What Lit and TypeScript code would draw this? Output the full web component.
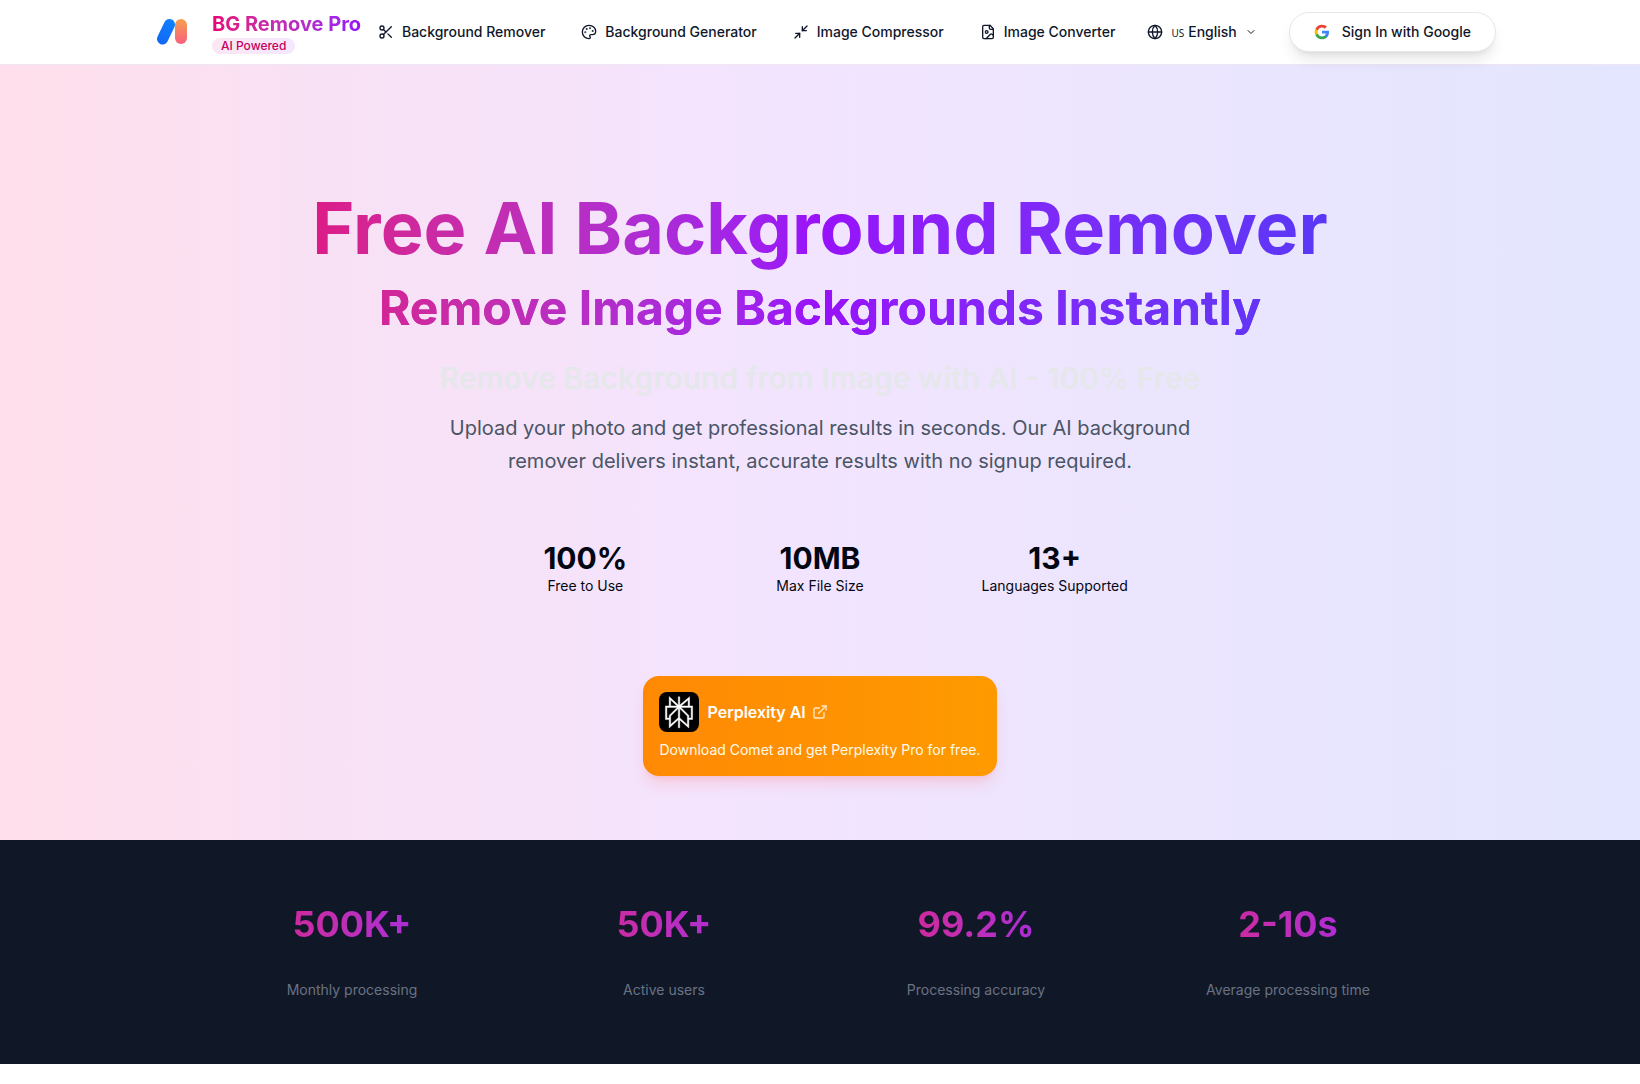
import { LitElement, html, css, svg } from "lit";
import { customElement } from "lit/decorators.js";

const icon = (body: unknown, cls = "icon") => html`<svg class=${cls} viewBox="0 0 24 24" aria-hidden="true">${body}</svg>`;

const scissors = svg`<circle cx="6" cy="6" r="3"/><path d="M8.12 8.12 12 12"/><path d="M20 4 8.12 15.88"/><circle cx="6" cy="18" r="3"/><path d="M14.8 14.8 20 20"/>`;
const palette = svg`<path d="M12 22a1 1 0 0 1 0-20 10 9 0 0 1 10 9 5 5 0 0 1-5 5h-2.250a1.750 1.750 0 0 0-1.400 2.800l.3.400a1.750 1.750 0 0 1-1.400 2.800z"/><circle cx="13.500" cy="6.500" r=".5"/><circle cx="17.500" cy="10.500" r=".5"/><circle cx="6.500" cy="12.500" r=".5"/><circle cx="8.500" cy="7.500" r=".5"/>`;
const minimize = svg`<path d="m14 10 7-7"/><path d="M20 10h-6V4"/><path d="m3 21 7-7"/><path d="M4 14h6v6"/>`;
const fileImage = svg`<path d="M15 2H6a2 2 0 0 0-2 2v16a2 2 0 0 0 2 2h12a2 2 0 0 0 2-2V7Z"/><path d="M14 2v4a2 2 0 0 0 2 2h4"/><circle cx="10" cy="12" r="2"/><path d="m20 17-1.300-1.300a2.410 2.410 0 0 0-3.400 0L9 22"/>`;
const globe = svg`<circle cx="12" cy="12" r="10"/><path d="M12 2a14.500 14.500 0 0 0 0 20 14.500 14.500 0 0 0 0-20"/><path d="M2 12h20"/>`;
const chevron = svg`<path d="m6 9 6 6 6-6"/>`;
const external = svg`<path d="M15 3h6v6"/><path d="M10 14 21 3"/><path d="M18 13v6a2 2 0 0 1-2 2H5a2 2 0 0 1-2-2V8a2 2 0 0 1 2-2h6"/>`;

const links = [
  { label: "Background Remover", glyph: scissors },
  { label: "Background Generator", glyph: palette },
  { label: "Image Compressor", glyph: minimize },
  { label: "Image Converter", glyph: fileImage },
];

const facts = [
  { value: "100%", label: "Free to Use" },
  { value: "10MB", label: "Max File Size" },
  { value: "13+", label: "Languages Supported" },
];

const metrics = [
  { value: "500K+", label: "Monthly processing" },
  { value: "50K+", label: "Active users" },
  { value: "99.2%", label: "Processing accuracy" },
  { value: "2-10s", label: "Average processing time" },
];

@customElement("site-header")
class SiteHeader extends LitElement {
  static styles = css`
    :host { display: block; position: relative; z-index: 1; background: #fff; box-shadow: 0 1px 0 #efe6f4; }
    .bar { box-sizing: border-box; max-width: 1400px; height: 64px; margin: 0 auto; padding: 0 24px; display: flex; align-items: center; justify-content: space-between; }
    a { color: inherit; text-decoration: none; }
    .brand { display: flex; align-items: center; gap: 12px; }
    .logo { width: 56px; height: 56px; flex: none; }
    .names { display: flex; flex-direction: column; align-items: flex-start; white-space: nowrap; }
    .name { font-size: 20px; line-height: 28px; font-weight: 700; color: transparent; background: linear-gradient(to right in oklab, #e60076, #9810fa); background-clip: text; -webkit-background-clip: text; }
    .tag { padding: 0 9px; border-radius: 8px; font-size: 12px; line-height: 16px; font-weight: 500; color: #c6005c; background: linear-gradient(to right in oklab, #fce7f3, #f3e8ff); }
    .links { display: flex; align-items: center; }
    .link, .lang { display: flex; align-items: center; gap: 8px; height: 36px; padding: 0 16px; font: 500 14px/20px Inter, sans-serif; color: #0f172b; white-space: nowrap; }
    .link + .link { margin-left: 4px; }
    .icon { width: 16px; height: 16px; flex: none; fill: none; stroke: currentColor; stroke-width: 2; stroke-linecap: round; stroke-linejoin: round; }
    .chevron { width: 12px; height: 12px; }
    button { background: none; border: 0; cursor: pointer; }
    .flag { font: 400 10px/16px "Noto Sans", sans-serif; }
    .locale { display: flex; align-items: baseline; gap: 4px; }
    .signin { display: flex; align-items: center; gap: 12px; height: 40px; margin-left: 16px; padding: 0 24px; border: 1px solid #e5e7eb; border-radius: 20px; background: #fff; color: #0f172b; font: 500 14px/20px Inter, sans-serif; white-space: nowrap; box-shadow: 0 10px 15px -3px rgb(0 0 0 / 0.1), 0 4px 6px -4px rgb(0 0 0 / 0.1); }
    .google { width: 16px; height: 16px; flex: none; }
  `;
  render() {
    return html`<header class="bar">
      <a class="brand" href="#">
        <svg class="logo" viewBox="0 0 56 56" aria-hidden="true">
          <defs>
            <linearGradient id="blue" gradientUnits="userSpaceOnUse" x1="28" y1="16" x2="15" y2="40"><stop offset="0" stop-color="#0d82ff"/><stop offset="1" stop-color="#1465f5"/></linearGradient>
            <linearGradient id="warm" x1="0" y1="0" x2="0" y2="1"><stop offset="0" stop-color="#f5a050"/><stop offset="1" stop-color="#f8607c"/></linearGradient>
          </defs>
          <path d="M25.500 20.500 18.500 35" stroke="url(#blue)" stroke-width="11" stroke-linecap="round"/>
          <rect x="31" y="15" width="12" height="25" rx="6" fill="url(#warm)"/>
        </svg>
        <span class="names"><span class="name">BG Remove Pro</span><span class="tag">AI Powered</span></span>
      </a>
      <nav class="links">
        ${links.map((l) => html`<a class="link" href="#">${icon(l.glyph)}<span>${l.label}</span></a>`)}
        <button class="lang" type="button">${icon(globe)}<span class="locale"><span class="flag">US</span><span>English</span></span>${icon(chevron, "icon chevron")}</button>
        <button class="signin" type="button">
          <svg class="google" viewBox="0 0 24 24" aria-hidden="true">
            <path fill="#4285F4" d="M22.560 12.250c0-.78-.07-1.530-.2-2.250H12v4.260h5.920a5.060 5.060 0 0 1-2.200 3.320v2.770h3.570c2.080-1.920 3.270-4.740 3.270-8.100z"/>
            <path fill="#34A853" d="M12 23c2.970 0 5.460-.98 7.280-2.660l-3.570-2.770c-.98.66-2.230 1.060-3.710 1.060-2.860 0-5.290-1.930-6.160-4.530H2.180v2.840A11 11 0 0 0 12 23z"/>
            <path fill="#FBBC05" d="M5.840 14.090a6.600 6.600 0 0 1 0-4.180V7.070H2.180a11 11 0 0 0 0 9.860z"/>
            <path fill="#EA4335" d="M12 5.380c1.620 0 3.060.56 4.210 1.640l3.150-3.150C17.450 2.090 14.970 1 12 1 7.700 1 3.990 3.470 2.180 7.070l3.660 2.840C6.710 7.310 9.140 5.380 12 5.380z"/>
          </svg>
          <span>Sign In with Google</span>
        </button>
      </nav>
    </header>`;
  }
}

@customElement("hero-section")
class HeroSection extends LitElement {
  static styles = css`
    :host { display: block; background: linear-gradient(to right in oklab, #ffdfeb, #f9e1f4 18%, #f3e4fe 46%, #e3e6fe); }
    .hero { padding: 128px 32px 64px; display: flex; flex-direction: column; align-items: center; text-align: center; }
    .heading { box-sizing: border-box; width: 100%; max-width: 1152px; margin: 0; font-weight: 700; color: transparent; background: linear-gradient(to right in oklab, #e60076, #9810fa 50%, #4f39f6); background-clip: text; -webkit-background-clip: text; }
    .title { font-size: 72px; line-height: 72px; }
    .subtitle { display: block; margin-top: 16px; font-size: 48px; line-height: 56px; }
    .tagline { margin: 24px 0 0; font-size: 30px; line-height: 36px; font-weight: 600; color: #e5e7eb; }
    .lead { max-width: 768px; margin: 16px 0 0; font-size: 20px; line-height: 33px; color: #4a5565; }
    .facts { box-sizing: border-box; width: 100%; max-width: 672px; margin: 62px 0 0; display: grid; grid-template-columns: repeat(3, 1fr); gap: 32px; }
    .fact { display: flex; flex-direction: column-reverse; }
    .fact dt { font-size: 14px; line-height: 20px; color: #030712; }
    .fact dd { margin: 0; font-size: 30px; line-height: 36px; font-weight: 700; color: #030712; }
    .promo { margin-top: 80px; padding: 16px; border-radius: 16px; display: flex; flex-direction: column; gap: 8px; text-align: left; text-decoration: none; color: #fff; background: linear-gradient(to right in oklab, #ff8904, #fe9a00); box-shadow: 0 10px 15px -3px rgb(255 100 100 / 0.2), 0 4px 6px -4px rgb(255 100 100 / 0.2); }
    .row { display: flex; align-items: center; gap: 8px; }
    .mark { width: 40px; height: 40px; flex: none; }
    .who { display: flex; align-items: center; gap: 6px; font-size: 16px; line-height: 24px; font-weight: 600; }
    .what { font-size: 14px; line-height: 20px; color: #fffbeb; }
    .icon { width: 16px; height: 16px; fill: none; stroke: #ffe8c8; stroke-width: 2; stroke-linecap: round; stroke-linejoin: round; }
  `;
  render() {
    return html`<section class="hero">
      <h1 class="heading title">Free AI Background Remover<span class="heading subtitle">Remove Image Backgrounds Instantly</span></h1>
      <h2 class="tagline">Remove Background from Image with AI - 100% Free</h2>
      <p class="lead">Upload your photo and get professional results in seconds. Our AI background remover delivers instant, accurate results with no signup required.</p>
      <dl class="facts">${facts.map((f) => html`<div class="fact"><dt>${f.label}</dt><dd>${f.value}</dd></div>`)}</dl>
      <a class="promo" href="#">
        <span class="row">
          <svg class="mark" viewBox="0 0 40 40" aria-hidden="true">
            <rect width="40" height="40" rx="8"/>
            <path transform="translate(4.300 4.600) scale(1.310)" fill="#fff" stroke="#fff" stroke-width=".3" d="M22.3977 7.0896h-2.3106V.0676l-7.5094 6.3542V.1577h-1.1554v6.1966L4.4904 0v7.0896H1.6023v10.3976h2.8882V24l6.932-6.3591v6.2005h1.1554v-6.0469l6.9318 6.1807v-6.4879h2.8882V7.0896zm-3.4657-4.531v4.531h-5.355l5.355-4.531zm-13.2862.0676 4.8691 4.4634H5.6458V2.6262zM2.7576 16.332V8.245h7.8476l-6.1149 6.1147v1.9723H2.7576zm2.8882 5.0404v-3.8852h.0001v-2.6488l5.7763-5.7764v7.0111l-5.7764 5.2993zm12.7086.0248-5.7766-5.1509V9.0618l5.7766 5.7766v6.5588zm2.8882-5.0652h-1.733v-1.9723L13.3948 8.245h7.8478v8.087z"/>
          </svg>
          <span class="who">Perplexity AI ${icon(external)}</span>
        </span>
        <span class="what">Download Comet and get Perplexity Pro for free.</span>
      </a>
    </section>`;
  }
}

@customElement("metrics-section")
class MetricsSection extends LitElement {
  static styles = css`
    :host { display: block; background: #101828; }
    .metrics { box-sizing: border-box; max-width: 1280px; margin: 0 auto; padding: 64px 32px; display: grid; grid-template-columns: repeat(4, 1fr); gap: 32px; }
    .metric { display: flex; flex-direction: column-reverse; gap: 36px; text-align: center; }
    .metric dt { font-size: 14px; line-height: 20px; color: #6a7282; }
    .metric dd { margin: 0; font-size: 36px; line-height: 40px; font-weight: 700; color: transparent; background: linear-gradient(to right in oklab, #e60076, #9810fa); background-clip: text; -webkit-background-clip: text; }
  `;
  render() {
    return html`<dl class="metrics">${metrics.map((m) => html`<div class="metric"><dt>${m.label}</dt><dd>${m.value}</dd></div>`)}</dl>`;
  }
}

@customElement("app-root")
class AppRoot extends LitElement {
  static styles = css`
    :host { display: block; min-height: 100vh; background: #fff; font-family: Inter, sans-serif; }
  `;
  render() {
    return html`<site-header></site-header><main><hero-section></hero-section><metrics-section></metrics-section></main>`;
  }
}
